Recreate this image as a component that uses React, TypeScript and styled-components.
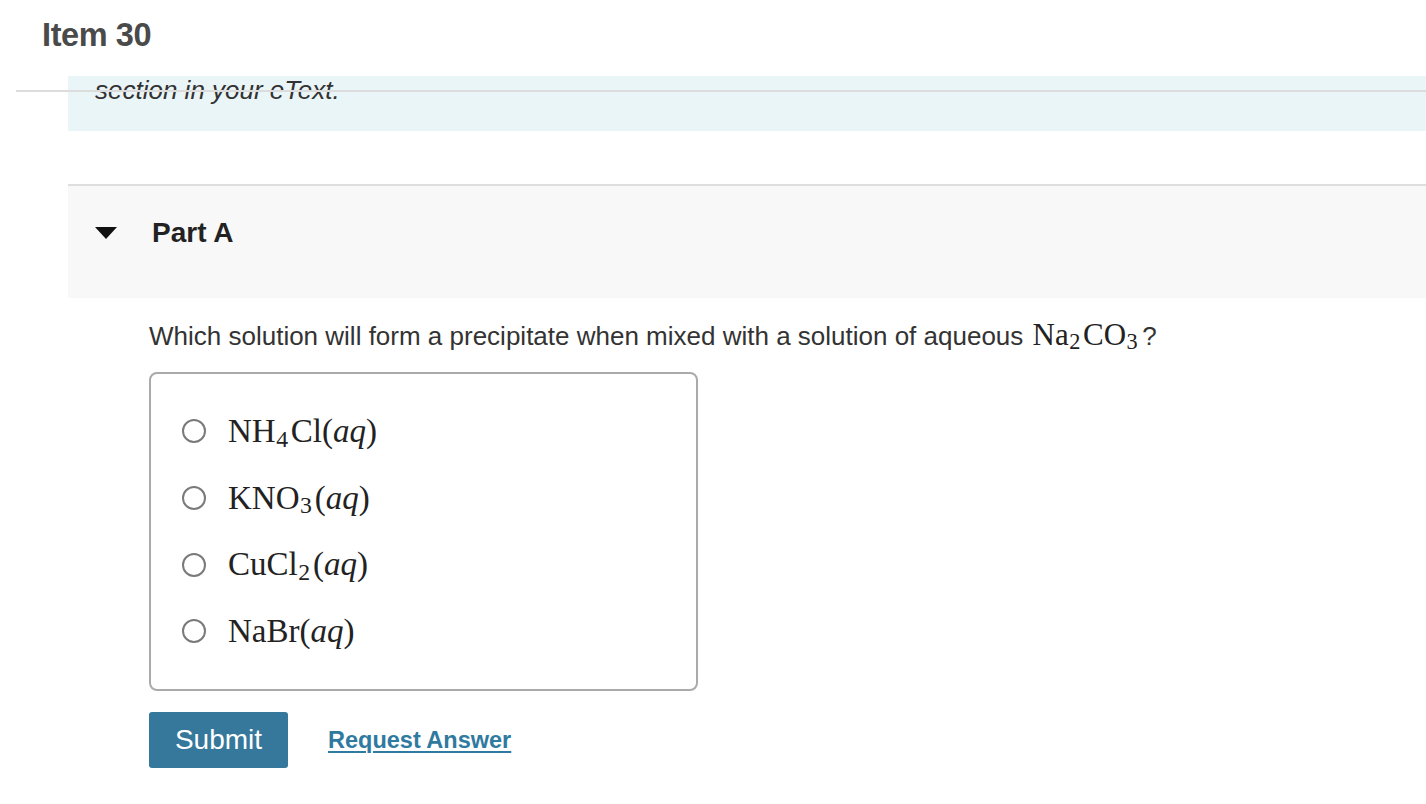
import React from "react";
import styled, { createGlobalStyle } from "styled-components";

const Global = createGlobalStyle`
  html, body { margin: 0; padding: 0; background: #fff; }
  body { font-family: "Liberation Sans", Arial, sans-serif; color: #333; }
`;

const Page = styled.div`
  position: relative;
  width: 1426px;
  height: 804px;
  overflow: hidden;
`;

const Header = styled.header`
  height: 76px;
  padding-left: 42px;
  box-sizing: border-box;
  display: flex;
  align-items: flex-start;
`;

const Title = styled.h1`
  margin: 19px 0 0;
  font-size: 32.5px;
  line-height: 1;
  font-weight: 700;
  color: #4a4a4a;
  letter-spacing: -0.4px;
`;

const HeaderRule = styled.div`
  position: absolute;
  left: 16px;
  right: 0;
  top: 90px;
  height: 2px;
  background: #dcdcdc;
`;

const Content = styled.main`
  padding-left: 68px;
`;

const Hint = styled.div`
  background: #eaf5f8;
  height: 55px;
  padding: 4px 0 0 27px;
  box-sizing: border-box;
  font-style: italic;
  font-size: 26px;
  line-height: 20px;
  color: #333;
`;

const PartHeader = styled.div`
  margin-top: 53px;
  border-top: 2px solid #dedede;
  background: #f8f8f8;
  height: 114px;
  box-sizing: border-box;
  padding: 33px 0 0 27px;
`;

const PartRow = styled.div`
  display: flex;
  align-items: center;
  height: 28px;
`;

const Caret = styled.svg`
  width: 22px;
  height: 12px;
  margin-right: 35px;
  flex: none;
`;

const PartTitle = styled.h2`
  margin: 0;
  font-size: 28px;
  line-height: 1;
  font-weight: 700;
  color: #222;
`;

const Body = styled.section`
  padding-left: 81px;
  padding-top: 22px;
`;

const Question = styled.p`
  margin: 0;
  height: 32px;
  font-size: 26px;
  color: #333;
  line-height: 32px;
`;

const Chem = styled.span`
  font-family: "Liberation Serif", "DejaVu Serif", serif;
  font-size: 31px;
  line-height: 0;
  color: #222;
  margin-left: 2px;
  margin-right: 2px;
`;

const Sub = styled.sub`
  font-size: 0.72em;
  vertical-align: -0.2em;
  line-height: 0;
  margin-left: 0.02em;
  margin-right: 0.12em;
`;

const Choices = styled.div`
  margin-top: 20px;
  width: 549px;
  height: 319px;
  box-sizing: border-box;
  border: 2px solid #aaa;
  border-radius: 8px;
  padding: 24px 0 0 31px;
  display: flex;
  flex-direction: column;
`;

const Choice = styled.label`
  display: flex;
  align-items: center;
  height: 66.7px;
  gap: 22px;
  cursor: pointer;
`;

const Radio = styled.span`
  width: 24px;
  height: 24px;
  box-sizing: border-box;
  border: 2px solid #7a7a7a;
  border-radius: 50%;
  background: #fff;
  flex: none;
`;

const ChoiceText = styled.span`
  font-family: "Liberation Serif", "DejaVu Serif", serif;
  font-size: 33px;
  line-height: 1;
  color: #222;
`;

const Actions = styled.div`
  margin-top: 21px;
  display: flex;
  align-items: center;
  gap: 40px;
`;

const SubmitButton = styled.button`
  width: 139px;
  height: 56px;
  padding: 0;
  border: none;
  border-radius: 3px;
  background: #35789b;
  color: #fff;
  font-family: "Liberation Sans", Arial, sans-serif;
  font-size: 28px;
  cursor: pointer;
`;

const Link = styled.a`
  font-size: 23.5px;
  font-weight: 700;
  color: #2f7aa0;
  text-decoration: underline;
  text-underline-offset: 3px;
  text-decoration-thickness: 2px;
`;

type Part = string | { sub: string } | { it: string };

const Formula: React.FC<{ parts: Part[] }> = ({ parts }) => (
  <>
    {parts.map((p, i) =>
      typeof p === "string" ? (
        <React.Fragment key={i}>{p}</React.Fragment>
      ) : "sub" in p ? (
        <Sub key={i}>{p.sub}</Sub>
      ) : (
        <i key={i}>{p.it}</i>
      )
    )}
  </>
);

const options: Part[][] = [
  ["NH", { sub: "4" }, "Cl(", { it: "aq" }, ")"],
  ["KNO", { sub: "3" }, "(", { it: "aq" }, ")"],
  ["CuCl", { sub: "2" }, "(", { it: "aq" }, ")"],
  ["NaBr(", { it: "aq" }, ")"],
];

export default function App() {
  return (
    <Page>
      <Global />
      <Header>
        <Title>Item 30</Title>
      </Header>
      <Content>
        <Hint>section in your eText.</Hint>
        <PartHeader>
          <PartRow>
            <Caret viewBox="0 0 22 12">
              <path d="M0 0 L22 0 L11 12 Z" fill="#111" />
            </Caret>
            <PartTitle>Part A</PartTitle>
          </PartRow>
        </PartHeader>
        <Body>
          <Question>
            Which solution will form a precipitate when mixed with a solution of aqueous{" "}
            <Chem>
              <Formula parts={["Na", { sub: "2" }, "CO", { sub: "3" }]} />
            </Chem>
            ?
          </Question>
          <Choices>
            {options.map((o, i) => (
              <Choice key={i}>
                <Radio />
                <ChoiceText>
                  <Formula parts={o} />
                </ChoiceText>
              </Choice>
            ))}
          </Choices>
          <Actions>
            <SubmitButton>Submit</SubmitButton>
            <Link href="#">Request Answer</Link>
          </Actions>
        </Body>
      </Content>
      <HeaderRule />
    </Page>
  );
}
